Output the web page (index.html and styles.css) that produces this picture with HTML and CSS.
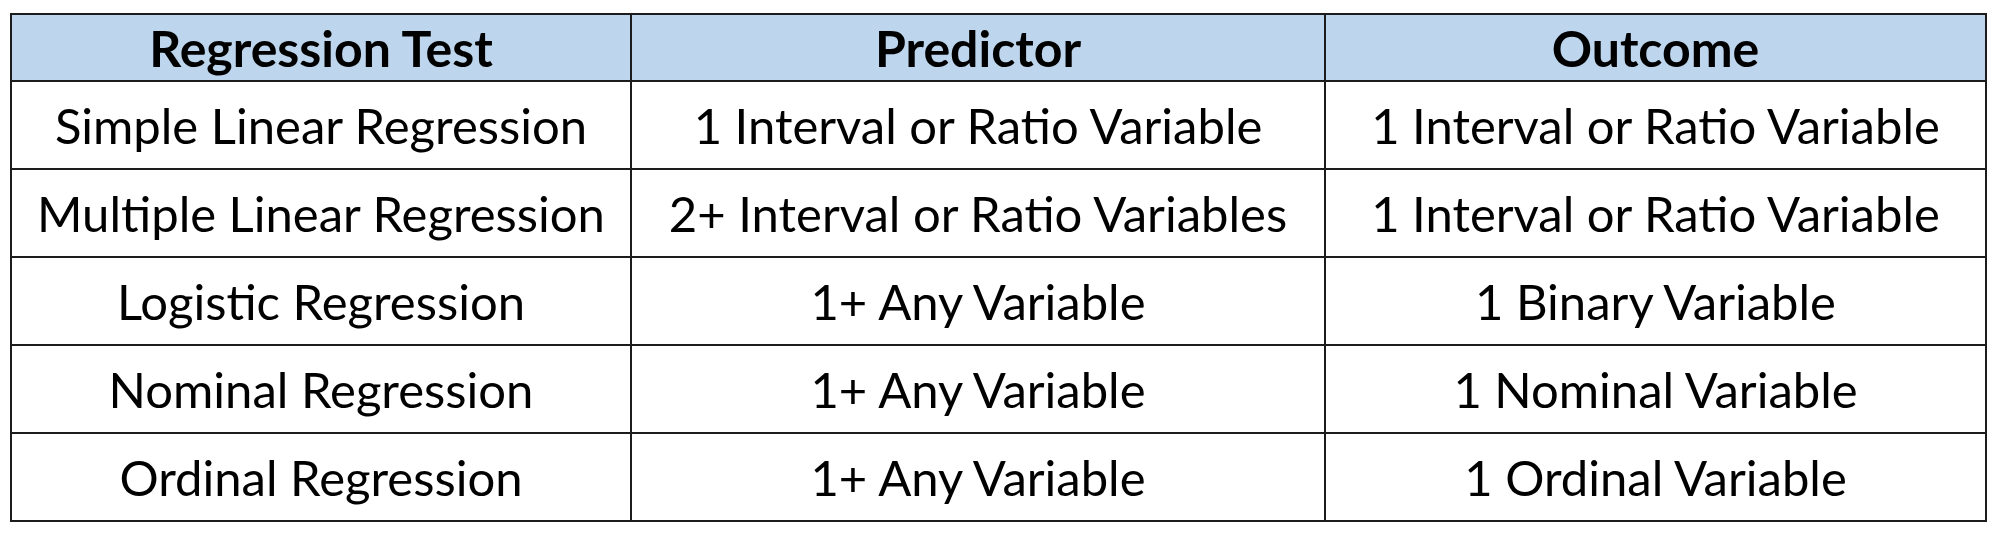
FILE: index.html
```html
<!DOCTYPE html>
<html>
<head>
<meta charset="utf-8">
<link rel="stylesheet" href="styles.css">
</head>
<body>
<table class="reg-table">
  <colgroup>
    <col class="c1">
    <col class="c2">
    <col class="c3">
  </colgroup>
  <thead>
    <tr class="head-row">
      <th>Regression Test</th>
      <th>Predictor</th>
      <th>Outcome</th>
    </tr>
  </thead>
  <tbody>
    <tr><td>Simple Linear Regression</td><td>1 Interval or Ratio Variable</td><td>1 Interval or Ratio Variable</td></tr>
    <tr><td>Multiple Linear Regression</td><td>2+ Interval or Ratio Variables</td><td>1 Interval or Ratio Variable</td></tr>
    <tr><td>Logistic Regression</td><td>1+ Any Variable</td><td>1 Binary Variable</td></tr>
    <tr><td>Nominal Regression</td><td>1+ Any Variable</td><td>1 Nominal Variable</td></tr>
    <tr><td>Ordinal Regression</td><td>1+ Any Variable</td><td>1 Ordinal Variable</td></tr>
  </tbody>
</table>
</body>
</html>
```

FILE: styles.css
```css
html, body {
  margin: 0;
  padding: 0;
  background: #ffffff;
}

body {
  padding: 13px 0 0 10px;
}

.reg-table {
  border-collapse: collapse;
  table-layout: fixed;
  width: 1975px;
  font-family: "Lato", "Open Sans", sans-serif;
  font-size: 49px;
  color: #000000;
  border: 2px solid #1c1c1c;
}

.c1 { width: 620px; }
.c2 { width: 694px; }
.c3 { width: 661px; }

.reg-table th,
.reg-table td {
  border: 2px solid #1c1c1c;
  text-align: center;
  vertical-align: middle;
  padding: 0;
  white-space: nowrap;
  line-height: 1;
}

.head-row {
  height: 67px;
  background: #bdd6ee;
}

.reg-table th {
  font-weight: 700;
  font-size: 50px;
}

.reg-table tbody tr {
  height: 88px;
}
```
